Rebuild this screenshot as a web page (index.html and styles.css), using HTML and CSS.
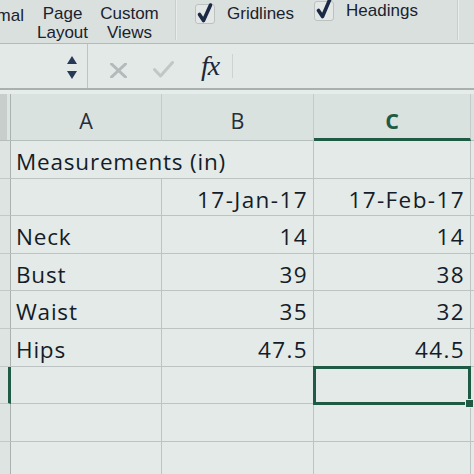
FILE: index.html
```html
<!DOCTYPE html>
<html>
<head>
<meta charset="utf-8">
<link rel="stylesheet" href="styles.css">
</head>
<body>
<div class="screen">
  <div class="ribbon">
    <div class="views">
      <div class="btn clipped"><span class="btn-text">Normal</span></div>
      <div class="btn page"><span>Page</span><span>Layout</span></div>
      <div class="btn custom"><span>Custom</span><span>Views</span></div>
    </div>
    <div class="sep"></div>
    <div class="checks">
      <label class="check">
        <span class="box"><svg viewBox="0 0 20 20" width="20" height="20"><path d="M4.5 10.5 L8.5 16.5 L15.5 1" fill="none" stroke="#1b2945" stroke-width="3.6" stroke-linecap="round" stroke-linejoin="round"/></svg></span>
        <span class="check-label">Gridlines</span>
      </label>
      <label class="check second">
        <span class="box"><svg viewBox="0 0 20 20" width="20" height="20"><path d="M4.5 9.5 L8.5 15.5 L16 -2" fill="none" stroke="#1b2945" stroke-width="3.6" stroke-linecap="round" stroke-linejoin="round"/></svg></span>
        <span class="check-label">Headings</span>
      </label>
    </div>
    <div class="sep end"></div>
  </div>

  <div class="formula-bar">
    <div class="name-box">
      <div class="spinner">
        <svg viewBox="0 0 10 8" width="10" height="8"><path d="M5 0 L10 8 L0 8 Z" fill="#283957"/></svg>
        <svg viewBox="0 0 10 8" width="10" height="8"><path d="M0 0 L10 0 L5 8 Z" fill="#283957"/></svg>
      </div>
    </div>
    <div class="fx-tools">
      <svg class="cancel" viewBox="0 0 17 15" width="17" height="15"><path d="M1.5 1 L15.5 14 M15.5 1 L1.5 14" stroke="#b4babb" stroke-width="3" stroke-linecap="round"/></svg>
      <svg class="enter" viewBox="0 0 21 17" width="21" height="17"><path d="M1.5 8.5 L7.5 15 L19.5 1.5" fill="none" stroke="#c1c7c7" stroke-width="3" stroke-linecap="round" stroke-linejoin="round"/></svg>
      <span class="fx">fx</span>
      <div class="fx-sep"></div>
    </div>
    <div class="formula-input"></div>
  </div>

  <div class="strip"></div>

  <div class="grid">
    <div class="rh corner"></div>
    <div class="ch">A</div>
    <div class="ch">B</div>
    <div class="ch active">C</div>
    <div class="ch rest"></div>

    <div class="rh"></div>
    <div class="c span2">Measurements (in)</div>
    <div class="c"></div>
    <div class="c rest"></div>

    <div class="rh"></div>
    <div class="c"></div>
    <div class="c num">17-Jan-17</div>
    <div class="c num">17-Feb-17</div>
    <div class="c rest"></div>

    <div class="rh"></div>
    <div class="c">Neck</div>
    <div class="c num">14</div>
    <div class="c num">14</div>
    <div class="c rest"></div>

    <div class="rh"></div>
    <div class="c">Bust</div>
    <div class="c num">39</div>
    <div class="c num">38</div>
    <div class="c rest"></div>

    <div class="rh"></div>
    <div class="c">Waist</div>
    <div class="c num">35</div>
    <div class="c num">32</div>
    <div class="c rest"></div>

    <div class="rh"></div>
    <div class="c">Hips</div>
    <div class="c num">47.5</div>
    <div class="c num">44.5</div>
    <div class="c rest"></div>

    <div class="rh active-row"></div>
    <div class="c"></div>
    <div class="c"></div>
    <div class="c selected"><span class="handle"></span></div>
    <div class="c rest"></div>

    <div class="rh"></div>
    <div class="c"></div>
    <div class="c"></div>
    <div class="c"></div>
    <div class="c rest"></div>

    <div class="rh"></div>
    <div class="c"></div>
    <div class="c"></div>
    <div class="c"></div>
    <div class="c rest"></div>

    <div class="rh"></div>
    <div class="c"></div>
    <div class="c"></div>
    <div class="c"></div>
    <div class="c rest"></div>
  </div>
</div>
</body>
</html>
```

FILE: styles.css
```css
html, body {
  margin: 0;
  padding: 0;
}

body {
  width: 474px;
  height: 474px;
  overflow: hidden;
  background: #e2e9e6;
  font-family: "Liberation Sans", Arial, sans-serif;
  color: #1a2230;
}

.screen {
  width: 474px;
  height: 474px;
  overflow: hidden;
  display: flex;
  flex-direction: column;
}

/* Ribbon */
.ribbon {
  height: 43px;
  flex: none;
  display: flex;
  align-items: stretch;
  background: #d9e0dd;
  border-bottom: 1px solid #b3bab9;
  font-size: 17px;
}

.views {
  display: flex;
  align-items: flex-start;
}

.btn {
  display: flex;
  flex-direction: column;
  align-items: center;
  line-height: 19px;
  padding-top: 4px;
}

.clipped {
  width: 24px;
  overflow: hidden;
  align-items: flex-end;
  padding-top: 4px;
  border-top: 3px solid #c3c9c8;
  margin-top: -3px;
  box-sizing: content-box;
}

.btn-text {
  white-space: nowrap;
  padding-top: 2px;
}

.page {
  margin-left: 13px;
  width: 51px;
}

.custom {
  margin-left: 12px;
  width: 59px;
}

.sep {
  width: 1px;
  background: #c9cfce;
  box-shadow: 1px 0 0 #e8edeb;
  margin-left: 16px;
  margin-bottom: 3px;
}

.sep.end {
  margin-left: auto;
  margin-right: 16px;
}

.checks {
  display: flex;
  align-items: flex-start;
  padding-left: 19px;
}

.check {
  display: flex;
  align-items: center;
  padding-top: 3px;
}

.check.second {
  margin-left: 20px;
  padding-top: 1px;
}

.box {
  width: 20px;
  height: 20px;
  box-sizing: border-box;
  border: 1px solid #bcc2c2;
  border-radius: 3px;
  background: #e3e8e6;
  position: relative;
}

.box svg {
  position: absolute;
  left: -1px;
  top: -1px;
  overflow: visible;
}

.check-label {
  margin-left: 12px;
  margin-top: 1px;
}

.check.second .check-label {
  margin-top: -1px;
}

/* Formula bar */
.formula-bar {
  height: 44px;
  flex: none;
  display: flex;
  background: #e3e9e6;
  border-bottom: 2px solid #a9b0b0;
}

.name-box {
  width: 88px;
  box-sizing: border-box;
  border-right: 1px solid #bdc4c3;
  display: flex;
  justify-content: flex-end;
  align-items: center;
  padding-right: 10px;
}

.spinner {
  display: flex;
  flex-direction: column;
  gap: 7px;
  margin-top: 3px;
}

.fx-tools {
  display: flex;
  align-items: center;
  padding-left: 22px;
}

.cancel {
  margin-top: 9px;
}

.enter {
  margin-left: 26px;
  margin-top: 7px;
}

.fx {
  margin-left: 27px;
  font-family: "Liberation Serif", "Times New Roman", serif;
  font-style: italic;
  font-size: 28px;
  color: #1d2636;
  letter-spacing: -1px;
}

.fx-sep {
  width: 1px;
  height: 24px;
  background: #cdd3d2;
  margin-left: 13px;
}

.formula-input {
  flex: 1;
}

.strip {
  height: 4px;
  flex: none;
  background: #e6ecea;
}

/* Grid */
.grid {
  display: grid;
  grid-template-columns: 11px 151px 152px 157px 1fr;
  grid-template-rows: 47px;
  grid-auto-rows: 37.6px;
  font-family: "Open Sans", "Liberation Sans", sans-serif;
  font-size: 22.5px;
  font-weight: 500;
  letter-spacing: 0.8px;
  color: #141c29;
}

.rh {
  background: #dde4e1;
  border-right: 1px solid #aab2b1;
  border-bottom: 1px solid #c2c9c8;
  box-sizing: border-box;
}

.rh.corner {
  background: linear-gradient(to right, #c7cecc 0 7px, #dde4e1 7px);
  border-bottom: 1px solid #b6bebd;
}

.rh.active-row {
  border-right: 3px solid #1f5a44;
}

.ch {
  background: #dae2df;
  border-right: 1px solid #c3cac9;
  border-bottom: 1px solid #b6bebd;
  box-sizing: border-box;
  display: flex;
  justify-content: center;
  align-items: center;
  font-size: 21.5px;
  font-weight: 400;
  letter-spacing: 0;
  color: #262e38;
  padding-top: 6px;
}

.ch.active {
  color: #1e5a44;
  font-weight: 700;
  border-bottom: 3px solid #1e5a44;
  padding-top: 8px;
}

.c {
  background: #e3eae7;
  border-right: 1px solid #bcc3c2;
  border-bottom: 1px solid #bcc3c2;
  box-sizing: border-box;
  padding: 6px 5px 0 5px;
  line-height: 30px;
  white-space: nowrap;
  position: relative;
}

.span2 {
  grid-column: span 2;
}

.num {
  text-align: right;
  letter-spacing: 1.4px;
}

.rest {
  border-right: none;
}

.c.selected {
  border: 3px solid #1e5a44;
  margin: -1px 0 -1px -1px;
  z-index: 2;
}

.handle {
  position: absolute;
  right: -6px;
  bottom: -6px;
  width: 7px;
  height: 7px;
  background: #1e5a44;
  border: 1px solid #e3eae7;
}
```
